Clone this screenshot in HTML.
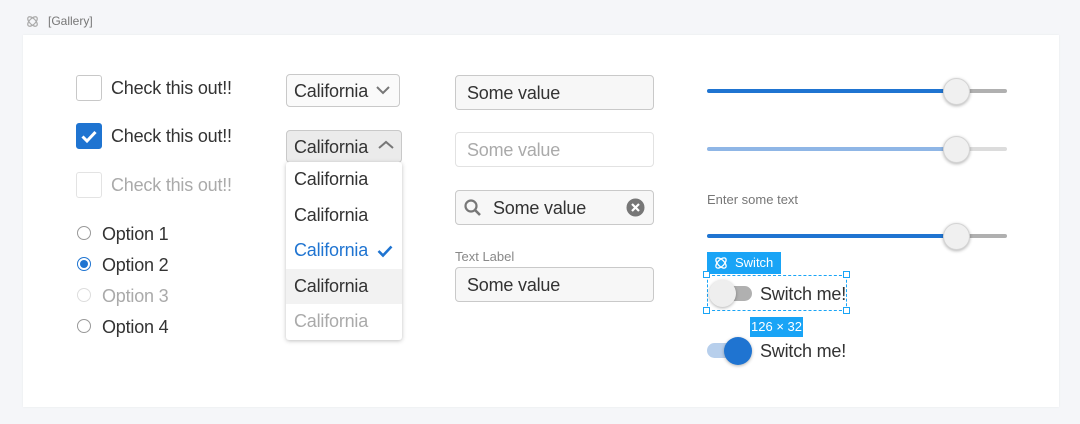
<!DOCTYPE html>
<html><head><style>
*{box-sizing:border-box;margin:0;padding:0}
body{width:1080px;height:424px;background:#f5f6f9;font-family:"Liberation Sans",sans-serif;position:relative;overflow:hidden;color:#333}
.a{position:absolute}
.card{left:23px;top:35px;width:1036px;height:372px;background:#fff;box-shadow:0 0 2px rgba(0,0,0,.06)}
.cb{width:26px;height:26px;border:1px solid #c8c8c8;border-radius:3px;background:#fff}
.t18{font-size:18px;line-height:22px;white-space:nowrap;letter-spacing:-0.2px}
.rd{width:14px;height:14px;border:1px solid #999;border-radius:50%}
.inp{width:199px;height:35px;border:1px solid #c9c9c9;border-radius:4px;background:#f7f7f7;font-size:18px;line-height:34px;padding-left:11px;letter-spacing:-0.2px}
.trk{height:4px;border-radius:2px}
.thumb{width:27px;height:27px;border-radius:50%;background:#f0f0f0;border:1px solid #d4d4d4;box-shadow:0 1px 3px rgba(0,0,0,.3)}
.item{left:0;width:116px;height:35.5px;font-size:18px;line-height:35px;padding-left:8px;letter-spacing:-0.2px}
</style></head><body>
<svg class="a" style="left:26px;top:15px" width="13" height="13" viewBox="0 0 13 13" fill="none" stroke="#aaa" stroke-width="1.2"><ellipse cx="6.5" cy="6.5" rx="6" ry="3" transform="rotate(45 6.5 6.5)"/><ellipse cx="6.5" cy="6.5" rx="6" ry="3" transform="rotate(-45 6.5 6.5)"/></svg>
<div class="a" style="left:48px;top:14px;font-size:12px;color:#777">[Gallery]</div>
<div class="a card"></div>

<div class="a cb" style="left:76px;top:75px"></div>
<div class="a t18" style="left:111px;top:77px">Check this out!!</div>
<div class="a cb" style="left:76px;top:123px;background:#1f74d1;border-color:#1f74d1"><svg width="24" height="24" viewBox="0 0 24 24"><path d="M5.5 12.5l4.5 4.5 8.5-9" fill="none" stroke="#fff" stroke-width="3"/></svg></div>
<div class="a t18" style="left:111px;top:125px">Check this out!!</div>
<div class="a cb" style="left:76px;top:172px;border-color:#e3e3e3"></div>
<div class="a t18" style="left:111px;top:174px;color:#aaa">Check this out!!</div>

<div class="a rd" style="left:77px;top:226px"></div><div class="a t18" style="left:102px;top:223px">Option 1</div>
<div class="a rd" style="left:77px;top:257px;border-color:#1f74d1"><div style="margin:2px;width:8px;height:8px;border-radius:50%;background:#1f74d1"></div></div><div class="a t18" style="left:102px;top:254px">Option 2</div>
<div class="a rd" style="left:77px;top:288px;border-color:#ddd"></div><div class="a t18" style="left:102px;top:285px;color:#aaa">Option 3</div>
<div class="a rd" style="left:77px;top:319px"></div><div class="a t18" style="left:102px;top:316px">Option 4</div>

<div class="a inp" style="left:286px;top:74px;width:114px;height:33px;line-height:32px;padding-left:7px;background:#fafafa">California</div>
<svg class="a" style="left:376px;top:85px" width="14" height="10"><path d="M1 2l6 6 6-6" fill="none" stroke="#777" stroke-width="2"/></svg>
<div class="a inp" style="left:286px;top:130px;width:116px;height:33px;line-height:32px;padding-left:7px;background:#ebebeb">California</div>
<svg class="a" style="left:378px;top:140px" width="16" height="10"><path d="M1 8l7-6 7 6" fill="none" stroke="#777" stroke-width="2"/></svg>
<div class="a" style="left:286px;top:162px;width:116px;height:178px;background:#fff;border-radius:3px;box-shadow:0 1px 4px rgba(0,0,0,.25);overflow:hidden">
<div class="a item" style="top:0">California</div>
<div class="a item" style="top:35.5px">California</div>
<div class="a item" style="top:71px;color:#1f74d1">California</div>
<svg class="a" style="left:91px;top:82px" width="16" height="14"><path d="M1.5 7l4.5 4.5 8.5-9" fill="none" stroke="#1f74d1" stroke-width="2.6"/></svg>
<div class="a item" style="top:106.5px;background:#f2f2f2">California</div>
<div class="a item" style="top:142px;color:#aaa">California</div>
</div>

<div class="a inp" style="left:455px;top:75px">Some value</div>
<div class="a inp" style="left:455px;top:132px;background:#fff;border-color:#e2e2e2;color:#aaa">Some value</div>
<div class="a inp" style="left:455px;top:190px;padding-left:37px">Some value</div>
<svg class="a" style="left:463px;top:198px" width="20" height="20"><circle cx="8" cy="8" r="5.5" fill="none" stroke="#777" stroke-width="2.2"/><path d="M12 12l5 5" stroke="#777" stroke-width="2.6"/></svg>
<svg class="a" style="left:626px;top:198px" width="19" height="19"><circle cx="9.5" cy="9.5" r="9" fill="#777"/><path d="M6 6l7 7M13 6l-7 7" stroke="#fff" stroke-width="2.2"/></svg>
<div class="a" style="left:455px;top:249px;font-size:13px;color:#888">Text Label</div>
<div class="a inp" style="left:455px;top:267px">Some value</div>

<div class="a trk" style="left:707px;top:89px;width:250px;background:#1f74d1"></div>
<div class="a trk" style="left:957px;top:89px;width:50px;background:#b0b0b0"></div>
<div class="a thumb" style="left:943px;top:78px"></div>
<div class="a trk" style="left:707px;top:147px;width:250px;background:#8fb6e6"></div>
<div class="a trk" style="left:957px;top:147px;width:50px;background:#dcdcdc"></div>
<div class="a thumb" style="left:943px;top:136px"></div>
<div class="a" style="left:707px;top:192px;font-size:13px;color:#777">Enter some text</div>
<div class="a trk" style="left:707px;top:234px;width:250px;background:#1f74d1"></div>
<div class="a trk" style="left:957px;top:234px;width:50px;background:#b0b0b0"></div>
<div class="a thumb" style="left:943px;top:223px"></div>

<div class="a" style="left:707px;top:252px;width:74px;height:22px;background:#19a4f6;color:#fff;font-size:13px;line-height:22px;padding-left:28px">Switch</div>
<svg class="a" style="left:714px;top:256px" width="14" height="14" viewBox="0 0 13 13" fill="none" stroke="#fff" stroke-width="1.2"><ellipse cx="6.5" cy="6.5" rx="6" ry="3" transform="rotate(45 6.5 6.5)"/><ellipse cx="6.5" cy="6.5" rx="6" ry="3" transform="rotate(-45 6.5 6.5)"/></svg>
<div class="a" style="left:707px;top:275px;width:140px;height:36px;border:1px dashed #19a4f6"></div>
<div class="a" style="left:703px;top:271px;width:7px;height:7px;border:1px solid #19a4f6;background:#fff"></div>
<div class="a" style="left:843px;top:271px;width:7px;height:7px;border:1px solid #19a4f6;background:#fff"></div>
<div class="a" style="left:703px;top:307px;width:7px;height:7px;border:1px solid #19a4f6;background:#fff"></div>
<div class="a" style="left:843px;top:307px;width:7px;height:7px;border:1px solid #19a4f6;background:#fff"></div>
<div class="a" style="left:712px;top:286px;width:40px;height:15px;border-radius:8px;background:#b0b0b0"></div>
<div class="a" style="left:709px;top:280px;width:27px;height:27px;border-radius:50%;background:#eee;box-shadow:0 1px 3px rgba(0,0,0,.3)"></div>
<div class="a t18" style="left:760px;top:283px">Switch me!</div>
<div class="a" style="left:750px;top:317px;width:53px;height:20px;background:#19a4f6;color:#fff;font-size:13px;line-height:20px;text-align:center">126 × 32</div>
<div class="a" style="left:707px;top:343px;width:43px;height:15px;border-radius:8px;background:#b7cfec"></div>
<div class="a" style="left:724px;top:337px;width:28px;height:28px;border-radius:50%;background:#1f74d1;box-shadow:0 1px 3px rgba(0,0,0,.3)"></div>
<div class="a t18" style="left:760px;top:340px">Switch me!</div>
</body></html>
